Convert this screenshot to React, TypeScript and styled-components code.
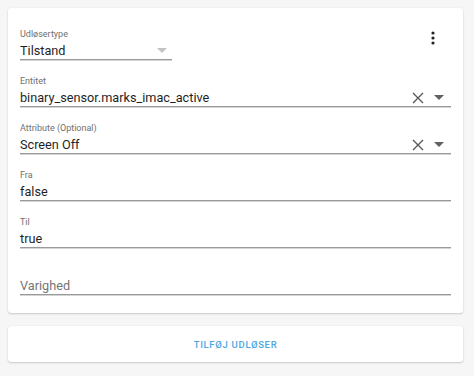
import React from "react";
import styled, { createGlobalStyle } from "styled-components";

const Global = createGlobalStyle`
  html, body { margin: 0; padding: 0; background: #f6f6f6; }
  body { font-family: Roboto, "Noto Sans", sans-serif; }
`;

const Page = styled.div`
  width: 474px;
  height: 376px;
  box-sizing: border-box;
  padding: 8px 11px 0 8px;
  display: flex;
  flex-direction: column;
  gap: 13px;
`;

const Card = styled.div`
  background: #fff;
  border-radius: 3px;
  box-shadow: 0 1px 2px rgba(0, 0, 0, 0.18), 0 0 1px rgba(0, 0, 0, 0.08);
`;

const TriggerCard = styled(Card)`
  position: relative;
  padding: 5px 12px 18px 12px;
  display: flex;
  flex-direction: column;
`;

const Menu = styled.button`
  position: absolute;
  top: 20px;
  right: 20px;
  width: 20px;
  height: 20px;
  border: 0;
  background: none;
  padding: 0;
  display: flex;
  align-items: center;
  justify-content: center;
`;

const Field = styled.div<{ $width?: number }>`
  width: ${(p) => (p.$width ? `${p.$width}px` : "auto")};
  height: 47px;
  display: flex;
  flex-direction: column;
  justify-content: flex-end;
`;

const Label = styled.div`
  font-size: 9px;
  color: #6f6f6f;
  line-height: 11px;
  height: 11px;
  margin-bottom: 2px;
`;

const Row = styled.div<{ $placeholder?: boolean }>`
  display: flex;
  align-items: center;
  height: 18px;
  border-bottom: 1px solid #9a9a9a;
  box-shadow: 0 1px 0 #d4d4d4;
  font-size: 12.7px;
  color: ${(p) => (p.$placeholder ? "#757575" : "#1f1f1f")};
  box-sizing: border-box;
`;

const Value = styled.div`
  flex: 1;
  white-space: nowrap;
`;

const IconSlot = styled.span<{ $w: number }>`
  width: ${(p) => p.$w}px;
  display: flex;
  align-items: center;
  justify-content: center;
`;

const AddButton = styled(Card)`
  height: 36px;
  display: flex;
  align-items: center;
  justify-content: center;
  font-size: 9.5px;
  font-weight: 500;
  letter-spacing: 0.7px;
  color: #4ea6e2;
`;

const Caret = ({ color = "#616161" }: { color?: string }) => (
  <svg width="10" height="5" viewBox="0 0 10 5">
    <path d="M0 0 L10 0 L5 5 Z" fill={color} />
  </svg>
);

const Clear = () => (
  <svg width="12" height="12" viewBox="0 0 12 12">
    <path d="M1 1 L11 11 M11 1 L1 11" stroke="#555" strokeWidth="1.3" />
  </svg>
);

const Dots = () => (
  <svg width="4" height="14" viewBox="0 0 4 14">
    <circle cx="2" cy="2" r="1.6" fill="#222" />
    <circle cx="2" cy="7" r="1.6" fill="#222" />
    <circle cx="2" cy="12" r="1.6" fill="#222" />
  </svg>
);

export default function App() {
  return (
    <>
      <Global />
      <Page>
        <TriggerCard>
          <Menu aria-label="menu">
            <Dots />
          </Menu>
          <Field $width={152}>
            <Label>Udløsertype</Label>
            <Row>
              <Value>Tilstand</Value>
              <IconSlot $w={20}>
                <Caret color="#c4c4c4" />
              </IconSlot>
            </Row>
          </Field>
          <Field>
            <Label>Entitet</Label>
            <Row>
              <Value>binary_sensor.marks_imac_active</Value>
              <IconSlot $w={18}>
                <Clear />
              </IconSlot>
              <IconSlot $w={24}>
                <Caret />
              </IconSlot>
            </Row>
          </Field>
          <Field>
            <Label>Attribute (Optional)</Label>
            <Row>
              <Value>Screen Off</Value>
              <IconSlot $w={18}>
                <Clear />
              </IconSlot>
              <IconSlot $w={24}>
                <Caret />
              </IconSlot>
            </Row>
          </Field>
          <Field>
            <Label>Fra</Label>
            <Row>
              <Value>false</Value>
            </Row>
          </Field>
          <Field>
            <Label>Til</Label>
            <Row>
              <Value>true</Value>
            </Row>
          </Field>
          <Field>
            <Label />
            <Row $placeholder>
              <Value>Varighed</Value>
            </Row>
          </Field>
        </TriggerCard>
        <AddButton>TILFØJ UDLØSER</AddButton>
      </Page>
    </>
  );
}
